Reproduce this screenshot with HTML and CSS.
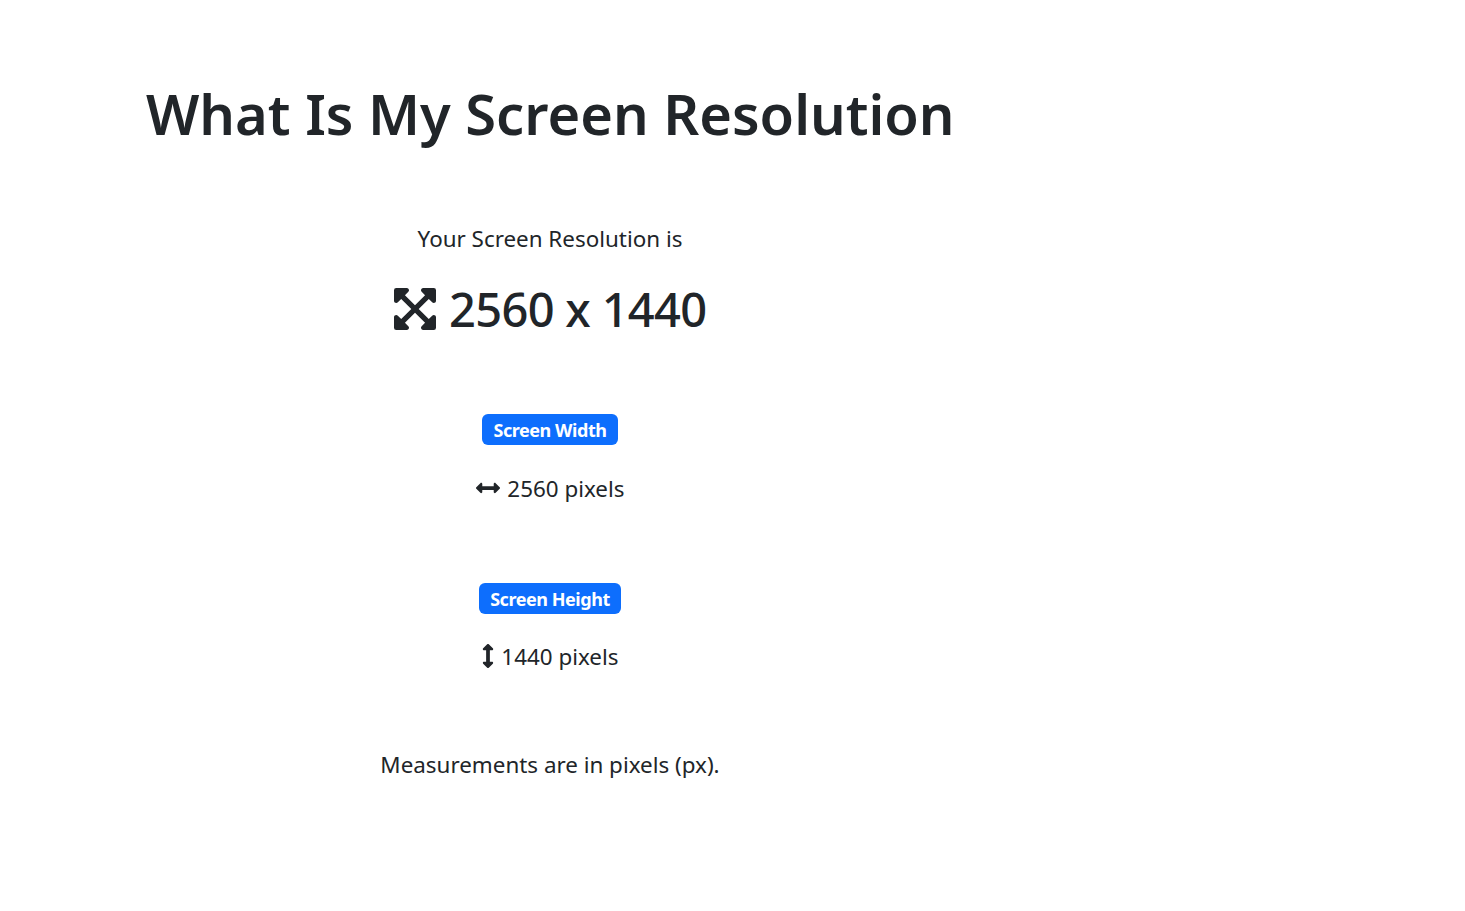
FILE: index.html
```html
<!DOCTYPE html>
<html lang="en">
<head>
	<meta charset="UTF-8">
	<title>What Is My Screen Resolution</title>
	<link rel="stylesheet" href="styles.css">
</head>
<body>
<div class="page">
	<h1 class="title">What Is My Screen Resolution</h1>
	<div class="result">
		<p class="lead">Your Screen Resolution is</p>
		<h2 class="size">
			<svg class="icon" viewBox="0 0 448 512"><path d="M448 344v112a23.94 23.94 0 0 1-24 24H312c-21.39 0-32.09-25.9-17-41l36.2-36.2L224 295.6 116.77 402.9 153 439c15.09 15.1 4.39 41-17 41H24a23.94 23.94 0 0 1-24-24V344c0-21.4 25.89-32.1 41-17l36.19 36.2L184.46 256 77.18 148.7 41 185c-15.1 15.1-41 4.4-41-17V56a23.94 23.94 0 0 1 24-24h112c21.39 0 32.09 25.9 17 41l-36.2 36.2L224 216.4l107.23-107.3L295 73c-15.09-15.1-4.39-41 17-41h112a23.94 23.94 0 0 1 24 24v112c0 21.4-25.89 32.1-41 17l-36.19-36.2L263.54 256l107.28 107.3L407 327.1c15.1-15.2 41-4.5 41 16.9z"/></svg>
			2560 x 1440
		</h2>
		<div class="metric">
			<span class="badge">Screen Width</span>
			<p class="value">
				<svg class="icon" viewBox="0 0 512 512"><path d="M377.941 169.941V216H134.059v-46.059c0-21.382-25.851-32.09-40.971-16.971L7.029 239.029c-9.373 9.373-9.373 24.568 0 33.941l86.059 86.059c15.119 15.119 40.971 4.411 40.971-16.971V296h243.882v46.059c0 21.382 25.851 32.09 40.971 16.971l86.059-86.059c9.373-9.373 9.373-24.568 0-33.941l-86.059-86.059c-15.119-15.12-40.971-4.412-40.971 16.97z"/></svg>
				2560 pixels
			</p>
		</div>
		<div class="metric">
			<span class="badge">Screen Height</span>
			<p class="value">
				<svg class="icon" viewBox="0 0 256 512"><path d="M214.059 377.941H168V134.059h46.059c21.382 0 32.09-25.851 16.971-40.971L144.971 7.029c-9.373-9.373-24.568-9.373-33.941 0L24.971 93.088c-15.119 15.119-4.411 40.971 16.971 40.971H88v243.882H41.941c-21.382 0-32.09 25.851-16.971 40.971l86.059 86.059c9.373 9.373 24.568 9.373 33.941 0l86.059-86.059c15.12-15.119 4.412-40.971-16.97-40.971z"/></svg>
				1440 pixels
			</p>
		</div>
		<p class="note">Measurements are in pixels (px).</p>
	</div>
</div>
</body>
</html>
```

FILE: styles.css
```css
html, body {
	margin: 0;
	background: #fff;
}
body {
	color: #212529;
	font-family: "Noto Sans", "Liberation Sans", sans-serif;
	font-size: 22.4px;
	line-height: 36px;
}
p {
	margin: 0;
}
.page {
	width: 808px;
	padding: 77px 0 0 146px;
}
.title {
	margin: 0;
	font-size: 56px;
	font-weight: 600;
	line-height: 72px;
	white-space: nowrap;
}
.result {
	text-align: center;
	padding-top: 72px;
}
.size {
	margin: 24px 0 0;
	font-size: 47px;
	font-weight: 500;
	line-height: 57px;
	letter-spacing: -0.7px;
}
.icon {
	height: 24px;
	margin-right: 2px;
	fill: currentColor;
	vertical-align: -3px;
}
.size .icon {
	height: 48px;
	margin-right: 2px;
	vertical-align: -6px;
}
.metric {
	padding-top: 76px;
}
.badge {
	display: inline-block;
	padding: 1px 11px 0;
	border-radius: 6px;
	background: #0d6efd;
	color: #fff;
	font-size: 18px;
	font-weight: 700;
	line-height: 30px;
	letter-spacing: -0.45px;
	vertical-align: top;
}
.value {
	margin-top: 20.6px;
}
.note {
	margin-top: 72px;
}
```
